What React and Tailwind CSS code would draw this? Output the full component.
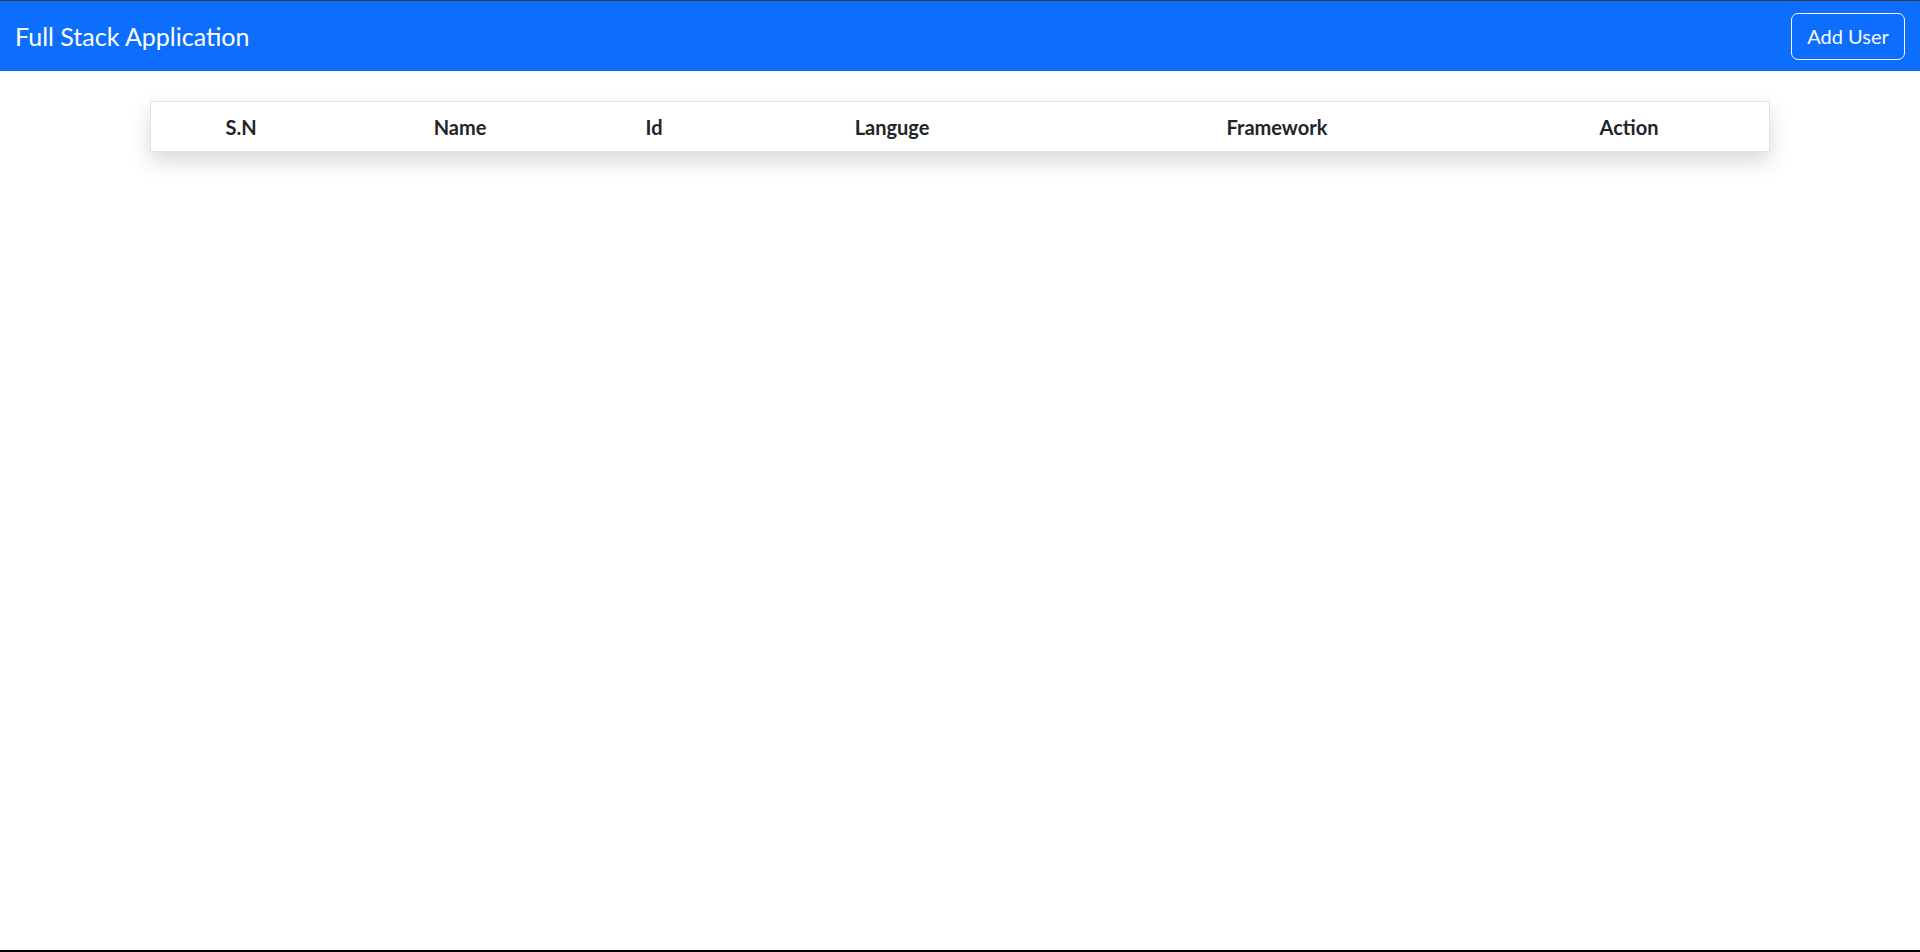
import React from "react";

const columns = [
  { label: "S.N", width: "w-[180px]" },
  { label: "Name", width: "w-[258px]" },
  { label: "Id", width: "w-[130px]" },
  { label: "Languge", width: "w-[346px]" },
  { label: "Framework", width: "w-[424px]" },
  { label: "Action", width: "w-[280px]" },
];

function Navbar() {
  return (
    <nav className="h-[70px] shrink-0 bg-[#0d6efd] px-[15px] flex items-center justify-between">
      <a href="#" className="text-[25px] leading-none text-white">
        Full Stack Application
      </a>
      <button className="h-[47px] w-[114px] rounded-[7px] border border-[#f8f9fa] text-[20px] text-[#f8f9fa]">
        Add User
      </button>
    </nav>
  );
}

function UserTable() {
  return (
    <div className="w-[1620px] mx-auto mt-[30px] border border-[#dee2e6] bg-white shadow-[0_10px_22px_rgba(0,0,0,0.15)]">
      <table className="w-full table-fixed border-collapse text-[#212529]">
        <colgroup>
          {columns.map((col) => (
            <col key={col.label} className={col.width} />
          ))}
        </colgroup>
        <thead>
          <tr>
            {columns.map((col) => (
              <th key={col.label} className="h-[49px] p-0 text-center text-[20px] font-bold">
                {col.label}
              </th>
            ))}
          </tr>
        </thead>
        <tbody></tbody>
      </table>
    </div>
  );
}

export default function App() {
  return (
    <div className="h-screen flex flex-col bg-white border-t border-t-[#3a3a3a] border-b-2 border-b-black font-['Lato','Liberation_Sans',sans-serif]">
      <Navbar />
      <UserTable />
    </div>
  );
}
